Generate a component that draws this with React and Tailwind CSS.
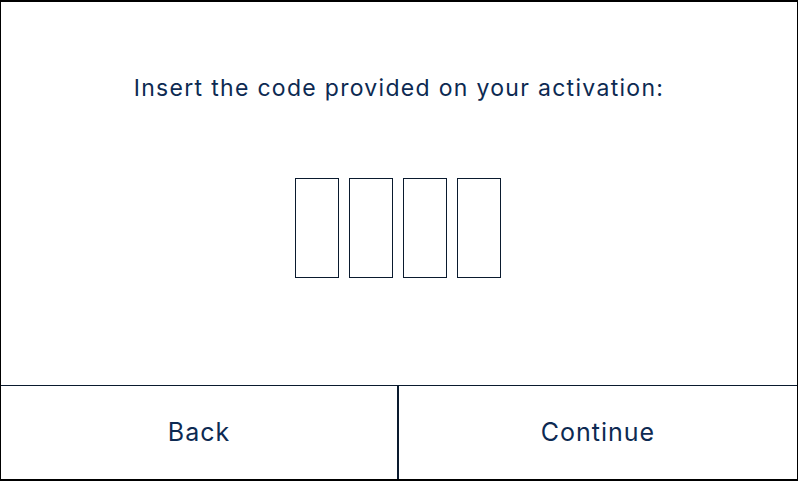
export default function App() {
  return (
    <div className="w-[798px] h-[481px] bg-white flex flex-col border-t-2 border-b-2 border-x border-black" style={{ fontFamily: "Inter, 'Noto Sans', sans-serif" }}>
      <div className="flex-1 flex flex-col items-center">
        <div className="mt-[71px] text-[23px] leading-[30px] text-[#0d2a52] tracking-[1.3px]">Insert the code provided on your activation:</div>
        <div className="mt-[75px] mr-[2px] flex gap-[10px]">
          <div className="w-[44px] h-[100px] border border-[#0a1a2e]" />
          <div className="w-[44px] h-[100px] border border-[#0a1a2e]" />
          <div className="w-[44px] h-[100px] border border-[#0a1a2e]" />
          <div className="w-[44px] h-[100px] border border-[#0a1a2e]" />
        </div>
      </div>
      <div className="h-[94px] flex border-t border-[#0a1a2e]">
        <div className="w-[396px] flex items-center justify-center text-[25px] tracking-[1px] text-[#0d2a52]">Back</div>
        <div className="w-[2px] bg-[#0a1a2e]" />
        <div className="flex-1 flex items-center justify-center text-[25px] tracking-[1px] text-[#0d2a52]">Continue</div>
      </div>
    </div>
  );
}
